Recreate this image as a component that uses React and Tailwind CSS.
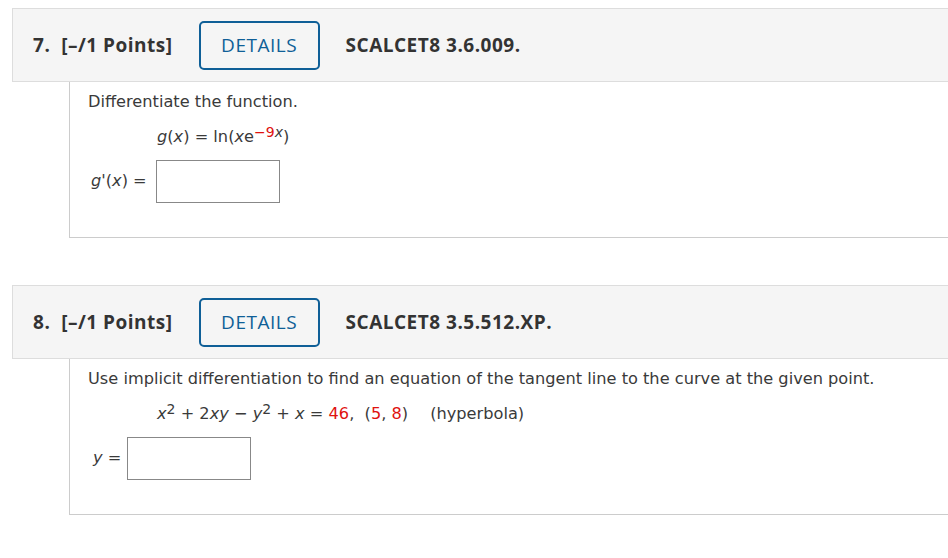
import React from 'react';

const head = { fontFamily: '"Open Sans", "Liberation Sans", sans-serif' };
const body = { fontFamily: '"DejaVu Sans", Verdana, sans-serif' };

function Header({ num, code }) {
  return (
    <div
      className="ml-[12px] h-[74px] border border-r-0 border-[#dddddd] bg-[#f5f5f5] flex items-center pl-[20px] text-[#333333] text-[19px] tracking-[0.5px]"
      style={head}
    >
      <span className="font-bold whitespace-pre">{num}.  [–/1 Points]</span>
      <button className="ml-[26px] w-[121px] h-[49px] border-2 border-[#0f5f97] rounded-[5px] font-medium text-[#0f5f97]">
        DETAILS
      </button>
      <span className="ml-[26px] font-bold">{code}</span>
    </div>
  );
}

function Panel({ children }) {
  return (
    <div
      className="ml-[69px] h-[156px] border-l border-b border-[#cccccc] pl-[18px] pt-[10px] text-[16.2px] text-[#3a3a3a]"
      style={body}
    >
      {children}
    </div>
  );
}

const Red = ({ children }) => <span className="text-[#e0120f]">{children}</span>;
const Sup = ({ children }) => (
  <sup className="text-[14px] relative -top-[5px]">{children}</sup>
);

export default function App() {
  return (
    <div className="w-[948px] h-[558px] overflow-hidden bg-white pt-[8px]">
      <Header num="7" code="SCALCET8 3.6.009." />
      <Panel>
        <div className="leading-[20px]">Differentiate the function.</div>
        <div className="ml-[69px] mt-[15px] leading-[20px]">
          <i>g</i>(<i>x</i>) = ln(<i>x</i>e<Sup><Red>−9</Red><i>x</i></Sup>)
        </div>
        <div className="flex items-center mt-[13px] ml-[3px]">
          <span><i>g</i>'(<i>x</i>) =</span>
          <div className="ml-[9px] w-[124px] h-[43px] border border-[#888888] bg-white" />
        </div>
      </Panel>
      <div className="h-[47px]" />
      <Header num="8" code="SCALCET8 3.5.512.XP." />
      <Panel>
        <div className="leading-[20px]">Use implicit differentiation to find an equation of the tangent line to the curve at the given point.</div>
        <div className="ml-[69px] mt-[15px] leading-[20px] whitespace-pre">
          <i>x</i><Sup>2</Sup> + 2<i>xy</i> − <i>y</i><Sup>2</Sup> + <i>x</i> = <Red>46</Red>,  (<Red>5</Red>, <Red>8</Red>)<span className="ml-[22px]">(hyperbola)</span>
        </div>
        <div className="flex items-center mt-[13px] ml-[5px]">
          <span><i>y</i> =</span>
          <div className="ml-[6px] w-[124px] h-[43px] border border-[#888888] bg-white" />
        </div>
      </Panel>
    </div>
  );
}
